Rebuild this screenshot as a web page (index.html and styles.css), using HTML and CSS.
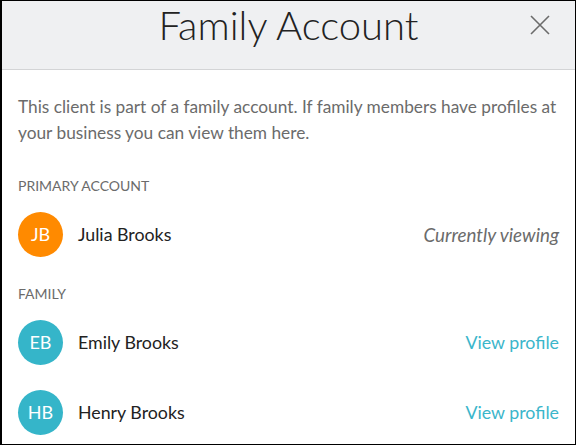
FILE: index.html
```html
<!DOCTYPE html>
<html lang="en">
<head>
  <meta charset="UTF-8" />
  <title>Family Account</title>
  <meta name="viewport" content="width=device-width, initial-scale=1" />
  <link rel="stylesheet" href="styles.css">
</head>
<body>
  <div class="modal">
    <div class="modal-header">
      <span></span>
      <h1>Family Account</h1>
      <button class="close" aria-label="Close">
        <svg width="20" height="20" viewBox="0 0 20 20">
          <path d="M1 1 L19 19 M19 1 L1 19" stroke="#6b6b6b" stroke-width="1.6" fill="none" />
        </svg>
      </button>
    </div>

    <div class="modal-body">
      <p class="intro">This client is part of a family account. If family members have profiles at your business you can view them here.</p>

      <div class="section-label first">PRIMARY ACCOUNT</div>
      <div class="member">
        <span class="avatar orange">JB</span>
        <span class="name">Julia Brooks</span>
        <span class="current">Currently viewing</span>
      </div>

      <div class="section-label">FAMILY</div>
      <div class="member">
        <span class="avatar teal">EB</span>
        <span class="name">Emily Brooks</span>
        <a class="link" href="#">View profile</a>
      </div>
      <div class="member">
        <span class="avatar teal">HB</span>
        <span class="name">Henry Brooks</span>
        <a class="link" href="#">View profile</a>
      </div>
    </div>
  </div>
</body>
</html>
```

FILE: styles.css
```css
html, body { margin: 0; padding: 0; background: #fff; }
body { font-family: Lato, "Open Sans", sans-serif; }

.modal {
  width: 573px; height: 443px; box-sizing: content-box;
  border: 1px solid #000; border-left-width: 2px;
  overflow: hidden; background: #fff;
}

.modal-header {
  display: grid; grid-template-columns: 64px 1fr 64px; align-items: start;
  height: 68px; background: #eff0f2; border-bottom: 1px solid #d3d4d6;
}
.modal-header h1 {
  margin: 0; text-align: center;
  font-weight: 300; font-size: 40px; line-height: 48px; color: #222;
}
.close {
  width: 64px; height: 48px; padding: 0 0 0 19px; border: 0; background: none;
  display: flex; align-items: center; justify-content: flex-start;
}

.modal-body { padding: 24px 16px 0 16px; }

.intro {
  margin: 0; font-size: 17.3px; line-height: 26px; color: #6b6b6b;
}

.section-label {
  margin-top: 15px; font-size: 14px; line-height: 20px; color: #6b6b6b;
}
.section-label.first { margin-top: 30px; }

.member {
  display: flex; align-items: center; height: 70px;
}
.section-label + .member { margin-top: 3px; }

.avatar {
  width: 45px; height: 45px; border-radius: 50%;
  display: flex; align-items: center; justify-content: center;
  color: #fff; font-size: 18px; margin-right: 15px;
}
.avatar.orange { background: #ff8a00; }
.avatar.teal { background: #35b5c9; }

.name { flex: 1; font-size: 17.8px; color: #222; }
.current { font-size: 18.8px; font-style: italic; color: #6b6b6b; }
.link { font-size: 17.8px; color: #3bb6cb; text-decoration: none; }
```
